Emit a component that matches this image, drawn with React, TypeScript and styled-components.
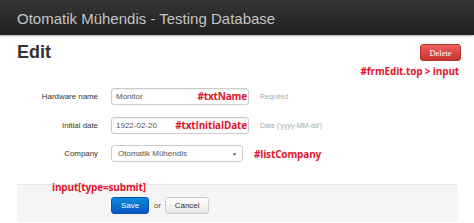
import styled, { createGlobalStyle } from 'styled-components';

const GlobalStyle = createGlobalStyle`
  body {
    margin: 0;
    background: #ffffff;
    font-family: "Liberation Sans", Arial, sans-serif;
  }
`;

const fields = [
  { label: 'Hardware name', value: '1', text: 'Monitor', tag: '#txtName', help: 'Required' },
  { label: 'Initial date', value: '2', text: '1922-02-20', tag: '#txtInitialDate', help: "Date ('yyyy-MM-dd')" },
];

export default function App() {
  return (
    <>
      <GlobalStyle />
      <Navbar>
        <Brand>Otomatik Mühendis - Testing Database</Brand>
      </Navbar>
      <Page>
        <Header>
          <Title>Edit</Title>
          <HeaderSide>
            <DeleteButton>Delete</DeleteButton>
            <Tag>#frmEdit.top &gt; input</Tag>
          </HeaderSide>
        </Header>
        <Form>
          {fields.map((f) => (
            <Row key={f.value}>
              <Label>{f.label}</Label>
              <InputWrap>
                <TextInput>{f.text}</TextInput>
                <InsideTag>{f.tag}</InsideTag>
              </InputWrap>
              <Help>{f.help}</Help>
            </Row>
          ))}
          <Row>
            <Label>Company</Label>
            <Select>
              <span>Otomatik Mühendis</span>
              <Caret>▼</Caret>
            </Select>
            <Tag $inline>#listCompany</Tag>
          </Row>
        </Form>
        <Actions>
          <SubmitTag>input[type=submit]</SubmitTag>
          <SaveButton>Save</SaveButton>
          <Or>or</Or>
          <CancelButton>Cancel</CancelButton>
        </Actions>
      </Page>
    </>
  );
}

const Navbar = styled.div`
  height: 35px;
  display: flex;
  align-items: center;
  padding-left: 17px;
  background: linear-gradient(#363636, #1e1e1e);
  box-shadow: 0 1px 2px rgba(0, 0, 0, 0.35);
`;

const Brand = styled.div`
  font-size: 15px;
  color: #c4c4c4;
  margin-top: 1px;
`;

const Page = styled.div`
  padding: 0 13px 0 17px;
`;

const Header = styled.div`
  display: flex;
  justify-content: space-between;
  align-items: flex-start;
  margin-top: 7px;
`;

const Title = styled.h2`
  margin: 0;
  font-size: 18px;
  line-height: 20px;
  font-weight: 700;
  color: #333333;
`;

const HeaderSide = styled.div`
  display: flex;
  flex-direction: column;
  align-items: flex-end;
  padding-top: 2px;
`;

const DeleteButton = styled.div`
  width: 41px;
  height: 17px;
  box-sizing: border-box;
  display: flex;
  align-items: center;
  justify-content: center;
  border-radius: 3px;
  border: 1px solid #b5302a;
  background: linear-gradient(#ee5f5b, #c9332d);
  color: #ffffff;
  font-family: "Liberation Serif", "Times New Roman", serif;
  font-size: 8.5px;
`;

const Tag = styled.div<{ $inline?: boolean }>`
  font-family: "Open Sans", "DejaVu Sans", sans-serif;
  font-weight: 700;
  font-size: 10px;
  letter-spacing: -0.15px;
  line-height: 12px;
  color: #e3142b;
  margin-top: ${(p) => (p.$inline ? '0' : '4px')};
  margin-right: ${(p) => (p.$inline ? '0' : '2px')};
  margin-left: ${(p) => (p.$inline ? '11px' : '0')};
`;

const Form = styled.div`
  display: flex;
  flex-direction: column;
  gap: 11.5px;
  margin-top: 11px;
`;

const Row = styled.div`
  display: flex;
  align-items: center;
  height: 17px;
`;

const Label = styled.div`
  width: 81px;
  text-align: right;
  margin-right: 13px;
  font-size: 7.9px;
  color: #333333;
`;

const InputWrap = styled.div`
  position: relative;
  width: 138px;
  height: 17px;
`;

const TextInput = styled.div`
  box-sizing: border-box;
  width: 100%;
  height: 100%;
  display: flex;
  align-items: center;
  padding-left: 4px;
  border: 1px solid #cccccc;
  border-radius: 3px;
  box-shadow: inset 0 1px 1px rgba(0, 0, 0, 0.075);
  font-size: 8px;
  color: #555555;
`;

const InsideTag = styled(Tag)`
  position: absolute;
  right: 2px;
  top: 2px;
  margin: 0;
`;

const Help = styled.div`
  margin-left: 11px;
  font-size: 7px;
  color: #aaaaaa;
`;

const Select = styled.div`
  box-sizing: border-box;
  width: 132px;
  height: 17px;
  display: flex;
  align-items: center;
  justify-content: space-between;
  padding: 0 5px 0 6px;
  border: 1px solid #cccccc;
  border-radius: 3px;
  background: #ffffff;
  font-size: 8px;
  color: #555555;
`;

const Caret = styled.span`
  font-size: 5px;
  color: #555555;
`;

const Actions = styled.div`
  position: relative;
  display: flex;
  align-items: center;
  margin: 22px 3px 0 0;
  padding: 12px 0 8px 94px;
  background: #f5f5f5;
  border-top: 1px solid #e5e5e5;
`;

const SubmitTag = styled(Tag)`
  position: absolute;
  left: 35px;
  top: -4px;
  margin: 0;
`;

const SaveButton = styled.div`
  box-sizing: border-box;
  width: 38px;
  height: 17px;
  display: flex;
  align-items: center;
  justify-content: center;
  border-radius: 3px;
  border: 1px solid #0a4fb3;
  background: linear-gradient(#0b8ad6, #0857c9);
  color: #ffffff;
  font-size: 8px;
`;

const Or = styled.span`
  margin: 0 4px 0 5px;
  font-size: 8px;
  color: #555555;
`;

const CancelButton = styled.div`
  box-sizing: border-box;
  width: 44px;
  height: 17px;
  display: flex;
  align-items: center;
  justify-content: center;
  border-radius: 3px;
  border: 1px solid #cccccc;
  background: linear-gradient(#ffffff, #e6e6e6);
  color: #333333;
  font-size: 8px;
`;
